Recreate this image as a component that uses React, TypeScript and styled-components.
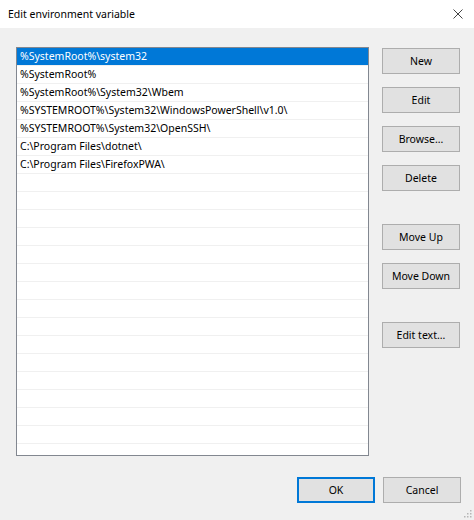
import React from "react";
import styled, { createGlobalStyle } from "styled-components";

const GlobalStyle = createGlobalStyle`
  html, body {
    margin: 0;
    padding: 0;
    background: #f0f0f0;
  }
  body {
    font-family: "Noto Sans", "Liberation Sans", sans-serif;
    font-size: 10.5px;
    color: #000;
  }
`;

const Window = styled.div`
  position: relative;
  width: 474px;
  height: 520px;
  background: #f0f0f0;
  box-sizing: border-box;
  overflow: hidden;
`;

const TitleBar = styled.div`
  height: 28px;
  background: #fff;
  display: flex;
  align-items: center;
  justify-content: space-between;
  padding: 0 11px 0 8px;
`;

const Title = styled.span`
  font-size: 10.5px;
  color: #000;
`;

const CloseButton = styled.span`
  display: flex;
  width: 10px;
  height: 10px;
  align-items: center;
  justify-content: center;
`;

const Body = styled.div`
  display: grid;
  grid-template-columns: 353px 78px;
  column-gap: 13px;
  padding: 19px 0 0 16px;
`;

const List = styled.div`
  height: 409px;
  box-sizing: border-box;
  border: 1px solid #828790;
  background: #fff;
  overflow: hidden;
`;

const Row = styled.div<{ $selected?: boolean }>`
  height: 18px;
  box-sizing: border-box;
  padding-left: 3px;
  line-height: 17px;
  white-space: nowrap;
  border-bottom: 1px solid #f0f0f0;
  background: ${({ $selected }) => ($selected ? "#0078d7" : "transparent")};
  color: ${({ $selected }) => ($selected ? "#fff" : "#000")};
`;

const ButtonColumn = styled.div`
  display: flex;
  flex-direction: column;
  gap: 13px;
  padding-top: 1px;
`;

const Spacer = styled.div<{ $h: number }>`
  height: ${({ $h }) => $h}px;
  margin-top: -13px;
`;

const Button = styled.button<{ $default?: boolean }>`
  width: 78px;
  height: 26px;
  box-sizing: border-box;
  background: #e1e1e1;
  border: 1px solid ${({ $default }) => ($default ? "#0078d7" : "#adadad")};
  box-shadow: ${({ $default }) => ($default ? "inset 0 0 0 1px #0078d7" : "none")};
  font-family: inherit;
  font-size: 10.5px;
  color: #000;
  padding: 0;
  margin: 0;
`;

const Footer = styled.div`
  display: flex;
  justify-content: flex-end;
  gap: 8px;
  padding: 21px 13px 0 0;
`;

const SizeGrip = styled.svg`
  position: absolute;
  right: 2px;
  bottom: 2px;
`;

const paths = [
  "%SystemRoot%\\system32",
  "%SystemRoot%",
  "%SystemRoot%\\System32\\Wbem",
  "%SYSTEMROOT%\\System32\\WindowsPowerShell\\v1.0\\",
  "%SYSTEMROOT%\\System32\\OpenSSH\\",
  "C:\\Program Files\\dotnet\\",
  "C:\\Program Files\\FirefoxPWA\\",
];

const TOTAL_ROWS = 23;

export default function App() {
  const rows = Array.from({ length: TOTAL_ROWS }, (_, i) => paths[i] ?? "");

  return (
    <>
      <GlobalStyle />
      <Window>
        <TitleBar>
          <Title>Edit environment variable</Title>
          <CloseButton>
            <svg width="10" height="10" viewBox="0 0 10 10">
              <path d="M0.5 0.5 L9.5 9.5 M9.5 0.5 L0.5 9.5" stroke="#444" strokeWidth="1" />
            </svg>
          </CloseButton>
        </TitleBar>
        <Body>
          <List>
            {rows.map((text, i) => (
              <Row key={i} $selected={i === 0}>
                {text}
              </Row>
            ))}
          </List>
          <ButtonColumn>
            <Button>New</Button>
            <Button>Edit</Button>
            <Button>Browse...</Button>
            <Button>Delete</Button>
            <Spacer $h={20} />
            <Button>Move Up</Button>
            <Button>Move Down</Button>
            <Spacer $h={20} />
            <Button>Edit text...</Button>
          </ButtonColumn>
        </Body>
        <Footer>
          <Button $default>OK</Button>
          <Button>Cancel</Button>
        </Footer>
        <SizeGrip width="10" height="10" viewBox="0 0 10 10">
          {[
            [8, 2],
            [8, 5],
            [5, 5],
            [8, 8],
            [5, 8],
            [2, 8],
          ].map(([x, y]) => (
            <rect key={`${x}-${y}`} x={x} y={y} width="1.5" height="1.5" fill="#b5b5b5" />
          ))}
        </SizeGrip>
      </Window>
    </>
  );
}
